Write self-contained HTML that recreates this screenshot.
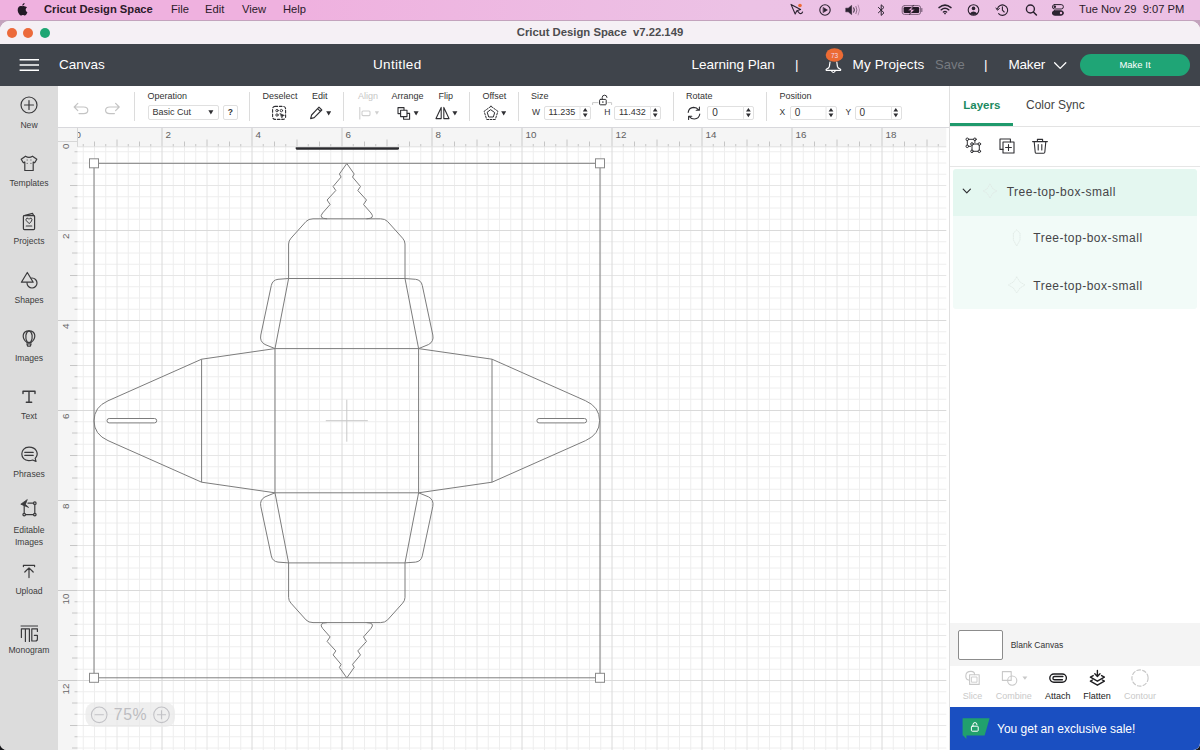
<!DOCTYPE html>
<html><head><meta charset="utf-8"><title>Cricut Design Space</title>
<style>
*{box-sizing:border-box;margin:0;padding:0}
html,body{width:1200px;height:750px;overflow:hidden;font-family:"Liberation Sans",sans-serif;}
body{background:linear-gradient(#c3a3bd 0,#c3a3bd 60px,#17171a 60px)}
.abs{position:absolute}
svg{position:absolute;overflow:visible}
#menubar{position:absolute;left:0;top:0;width:1200px;height:20px;background:linear-gradient(90deg,#efb1df 0,#efb1df 25%,#ecc2e5 62%,#ecc0e4 100%);color:#2b1a29;font-size:11.2px;}
#menubar span{position:absolute;top:3px;white-space:nowrap}
#win{position:absolute;left:0;top:21px;width:1200px;height:729px;border-radius:9px 9px 7px 7px;overflow:hidden;background:#fff}
#pg{position:absolute;left:0;top:-21px;width:1200px;height:750px}
#titlebar{position:absolute;left:0;top:20px;width:1200px;height:24px;background:#f5f0f5;}
#titlebar .t{position:absolute;left:0;width:1200px;top:6px;text-align:center;font-size:10.5px;font-weight:bold;color:#3a3a3c;letter-spacing:.1px}
.tl{position:absolute;top:27.5px;width:10px;height:10px;border-radius:50%}
#hdr{position:absolute;left:0;top:44px;width:1200px;height:42px;background:#3f444b;color:#fff;font-size:13.5px}
#hdr span{position:absolute;top:13px;line-height:16px;white-space:nowrap}
#side{position:absolute;left:0;top:86px;width:58px;height:664px;background:#dcdcdc}
.lb{position:absolute;left:0;width:58px;text-align:center;font-size:8.6px;color:#3c3c3c;line-height:12px;height:12px;margin-top:-6px}
#tool{position:absolute;left:58px;top:86px;width:891px;height:41px;background:#fff;font-size:9px;color:#333}
#tool .l{position:absolute;top:91px;white-space:nowrap;font-size:9px;color:#333;line-height:11px}
.l{position:absolute;white-space:nowrap;font-size:9px;color:#333;line-height:11px}
.sep{position:absolute;top:92px;width:1px;height:29px;background:#dcdcdc}
.box{position:absolute;top:104px;height:16px;border:1px solid #e0e0e0;border-radius:2px;background:#fff;font-size:9px;line-height:14px;padding-left:4px;color:#333;white-space:nowrap}
.lyr{letter-spacing:.5px;font-size:12px;color:#454548;line-height:14px;white-space:nowrap}
.act{top:690.7px;width:60px;text-align:center;font-size:9px;line-height:11px;white-space:nowrap}
#panel{position:absolute;left:949px;top:86px;width:251px;height:664px;background:#fff;border-left:1px solid #e0e0e0}
</style></head><body>
<div id="menubar">
<span style="left:44px;font-weight:bold">Cricut Design Space</span>
<span style="left:171px">File</span><span style="left:205px">Edit</span><span style="left:242px">View</span><span style="left:283px">Help</span>
<span style="left:1079px">Tue Nov 29&nbsp; 9:07 PM</span>
<svg style="left:0;top:0" width="1200" height="21" viewBox="0 0 1200 21" fill="none" stroke="#2b2230" stroke-width="1.1" stroke-linecap="round" stroke-linejoin="round">
<!-- apple -->
<path d="M25.3 6.6 C24.3 5.6 22.9 5.9 22.2 6.3 C21.4 5.9 19.8 5.5 18.6 6.9 C17 8.7 17.6 12.2 19.4 14.6 C20.2 15.6 21 15.7 22 15.2 C22.7 14.9 23.3 15 23.9 15.3 C24.8 15.7 25.6 15.4 26.3 14.4 C26.9 13.6 27.2 12.9 27.4 12.3 C25.4 11.4 25.1 8.3 27 7.5 C26.5 7 25.9 6.7 25.3 6.6Z M22.2 5.6 C22.2 4.2 23.2 3.1 24.6 2.9 C24.7 4.3 23.6 5.5 22.2 5.6Z" fill="#231a26" stroke="none"/>
<!-- cursor -->
<path d="M791 4.4 L795.2 14 L796.8 10.8 L800.6 9.6 Z M797.6 11.2 L799.4 13.2 Q801.4 14.4 802.6 12" stroke-width="1.1"/>
<circle cx="800" cy="5.5" r="1.8" fill="#ee6a35" stroke="none"/>
<!-- play -->
<circle cx="825" cy="10" r="5.2"/><path d="M823.4 7.6 L827.4 10 L823.4 12.4Z" fill="#2b2230" stroke-width=".6"/>
<!-- volume -->
<path d="M846 8.2 H848.2 L851.6 5.4 V14.6 L848.2 11.8 H846Z" fill="#2b2230" stroke-width=".6"/>
<path d="M853.8 7.8 Q855 10 853.8 12.2" stroke-width="1"/><path d="M856 6.4 Q858 10 856 13.6" stroke="#8a6a88" stroke-width="1"/><path d="M858.2 5 Q861 10 858.2 15" stroke="#b58eb0" stroke-width="1"/>
<!-- bluetooth -->
<path d="M878.4 7.4 L884 12.8 L881.2 15.4 V4.8 L884 7.4 L878.4 12.8" stroke-width="1"/>
<!-- battery -->
<rect x="902.2" y="5.6" width="18.4" height="8.8" rx="2.2" stroke="#7d627c" stroke-width="1"/><rect x="903.6" y="7" width="15.6" height="6" rx="1.2" fill="#231a26" stroke="none"/><path d="M921.8 8.6 V11.4" stroke="#7d627c" stroke-width="1.2"/>
<path d="M913.4 5.2 L908 10.6 H911 L909.4 14.8 L914.8 9.4 H911.8Z" fill="#efb2df" stroke="#231a26" stroke-width=".5"/>
<!-- wifi -->
<path d="M939 7.6 Q945 2.6 951 7.6" stroke-width="1.5"/><path d="M941.2 9.8 Q945 6.8 948.8 9.8" stroke-width="1.5"/><path d="M943.4 12 Q945 10.8 946.6 12" stroke-width="1.4"/><circle cx="945" cy="13.4" r=".9" fill="#2b2230" stroke="none"/>
<!-- user -->
<circle cx="973.5" cy="10" r="5.3"/><circle cx="973.5" cy="8.4" r="1.8" fill="#2b2230" stroke="none"/><path d="M969.8 13.6 Q973.5 9.6 977.2 13.6 Q973.5 16.4 969.8 13.6Z" fill="#2b2230" stroke="none"/>
<!-- time machine -->
<path d="M997.4 9 A5.2 5.2 0 1 1 998.6 13.6"/><path d="M996 8 L997.4 10.2 L999.4 8.6" stroke-width="1"/><path d="M1002.4 6.8 V10.2 L1004.2 12"/>
<!-- search -->
<circle cx="1030.4" cy="9" r="4" stroke-width="1.4"/><path d="M1033.4 12 L1036.4 15" stroke-width="1.6"/>
<!-- control center -->
<rect x="1052.4" y="4.6" width="11" height="4.4" rx="2.2" stroke-width="1"/><circle cx="1054.8" cy="6.8" r="1.3" fill="#2b2230" stroke="none"/>
<rect x="1052.4" y="10.8" width="11" height="4.4" rx="2.2" fill="#2b2230" stroke-width="1"/><circle cx="1061" cy="13" r="1.2" fill="#efb2df" stroke="none"/>
</svg>

</div>
<div id="win"><div id="pg">
<div id="titlebar"></div>
<div class="tl" style="left:6.5px;background:#ec6a3b"></div><div class="tl" style="left:23.3px;background:#ec6a3b"></div><div class="tl" style="left:40px;background:#1fa673"></div>
<div id="titlebar2" class="abs" style="left:0;width:1200px;top:25.5px;text-align:center;font-size:11.3px;line-height:13px;font-weight:bold;color:#4c4c4f">Cricut Design Space&nbsp; v7.22.149</div>
<div id="hdr">
<span style="left:59px">Canvas</span>
<span style="left:373px;letter-spacing:.34px">Untitled</span>
<span style="left:691.5px">Learning Plan</span>
<span style="left:795px">|</span>
<span style="left:852.5px;letter-spacing:.13px">My Projects</span>
<span style="left:935px;color:#777b80;font-size:13px;top:13px">Save</span>
<span style="left:984px">|</span>
<span style="left:1008.5px;letter-spacing:-.2px">Maker</span>
<div class="abs" style="left:1080px;top:10px;width:110px;height:21.5px;border-radius:11px;background:#1fa576;text-align:center;font-size:9.5px;line-height:22px">Make It</div>
<svg style="left:0;top:0" width="1200" height="42" viewBox="0 44 1200 42" fill="none" stroke="#fff" stroke-width="1.3" stroke-linecap="round" stroke-linejoin="round">
<path d="M19.6 59.8H39M19.6 65H39M19.6 70.2H39" stroke-width="1.6" stroke-linecap="butt"/>
<!-- bell -->
<path d="M830 62 L829.4 66.4 Q829 68.4 826.6 69 Q825.8 69.4 826.2 70.4 H840.6 Q841 69.4 840.2 69 Q837.8 68.4 837.4 66.4 L836.8 62" stroke-width="1.2"/>
<path d="M831.6 71 Q833.4 74 835.2 71" stroke-width="1.2"/>
<ellipse cx="834.5" cy="55" rx="8.8" ry="6.7" fill="#ec6b34" stroke="none"/>
<!-- chevron -->
<path d="M1054.6 62.8 L1060.2 68.4 L1065.8 62.8" stroke-width="1.3"/>
</svg>
<div class="abs" style="left:826px;top:6.5px;width:17px;text-align:center;font-size:6.5px;line-height:9px;color:#f3d9ee">73</div>

</div>
<svg class="abs" style="left:58px;top:127px" width="891" height="623" viewBox="58 127 891 623" font-family="Liberation Sans, sans-serif">
<rect x="58" y="127" width="891" height="623" fill="#fff"/>
<path d="M83.25 147V750M94.50 147V750M105.75 147V750M128.25 147V750M139.50 147V750M150.75 147V750M173.25 147V750M184.50 147V750M195.75 147V750M218.25 147V750M229.50 147V750M240.75 147V750M263.25 147V750M274.50 147V750M285.75 147V750M308.25 147V750M319.50 147V750M330.75 147V750M353.25 147V750M364.50 147V750M375.75 147V750M398.25 147V750M409.50 147V750M420.75 147V750M443.25 147V750M454.50 147V750M465.75 147V750M488.25 147V750M499.50 147V750M510.75 147V750M533.25 147V750M544.50 147V750M555.75 147V750M578.25 147V750M589.50 147V750M600.75 147V750M623.25 147V750M634.50 147V750M645.75 147V750M668.25 147V750M679.50 147V750M690.75 147V750M713.25 147V750M724.50 147V750M735.75 147V750M758.25 147V750M769.50 147V750M780.75 147V750M803.25 147V750M814.50 147V750M825.75 147V750M848.25 147V750M859.50 147V750M870.75 147V750M893.25 147V750M904.50 147V750M915.75 147V750M938.25 147V750M77 151.75H949M77 163.00H949M77 174.25H949M77 196.75H949M77 208.00H949M77 219.25H949M77 241.75H949M77 253.00H949M77 264.25H949M77 286.75H949M77 298.00H949M77 309.25H949M77 331.75H949M77 343.00H949M77 354.25H949M77 376.75H949M77 388.00H949M77 399.25H949M77 421.75H949M77 433.00H949M77 444.25H949M77 466.75H949M77 478.00H949M77 489.25H949M77 511.75H949M77 523.00H949M77 534.25H949M77 556.75H949M77 568.00H949M77 579.25H949M77 601.75H949M77 613.00H949M77 624.25H949M77 646.75H949M77 658.00H949M77 669.25H949M77 691.75H949M77 703.00H949M77 714.25H949M77 736.75H949M77 748.00H949" stroke="#eeeeee" stroke-width="1" fill="none"/>
<path d="M117.00 147V750M207.00 147V750M297.00 147V750M387.00 147V750M477.00 147V750M567.00 147V750M657.00 147V750M747.00 147V750M837.00 147V750M927.00 147V750M77 185.50H949M77 275.50H949M77 365.50H949M77 455.50H949M77 545.50H949M77 635.50H949M77 725.50H949" stroke="#e6e6e6" stroke-width="1" fill="none"/>
<path d="M162.00 147V750M252.00 147V750M342.00 147V750M432.00 147V750M522.00 147V750M612.00 147V750M702.00 147V750M792.00 147V750M882.00 147V750M77 230.50H949M77 320.50H949M77 410.50H949M77 500.50H949M77 590.50H949M77 680.50H949" stroke="#dadada" stroke-width="1" fill="none"/>
<path d="M366.5 218.8Q375.5 218.5 371.0 213.0L363.5 204.5L366.5 200.0L357.8 190.5L360.5 186.5L352.5 177.0L354.2 174.0L346.8 163.5L339.4 174.0L341.1 177.0L333.1 186.5L335.8 190.5L327.1 200.0L330.1 204.5L322.6 213.0Q318.1 218.5 327.1 218.8M288.6 278.5V244.0Q288.6 240.8 291.0 238.2L306.0 221.5Q308.5 218.8 313.0 218.8H380.6Q385.1 218.8 387.6 221.5L402.6 238.2Q405.0 240.8 405.0 244.0V278.5M288.6 278.5H405.0M288.6 278.5L275.0 348.6M288.6 278.5L278.0 279.3Q272.5 280.0 271.3 285.5L260.8 335.0Q259.5 341.5 265.0 344.5L275.0 348.6M405.0 278.5L418.6 348.6M405.0 278.5L415.6 279.3Q421.1 280.0 422.3 285.5L432.8 335.0Q434.1 341.5 428.6 344.5L418.6 348.6M366.5 622.6Q375.5 622.9 371.0 628.4L363.5 636.9L366.5 641.4L357.8 650.9L360.5 654.9L352.5 664.4L354.2 667.4L346.8 677.9L339.4 667.4L341.1 664.4L333.1 654.9L335.8 650.9L327.1 641.4L330.1 636.9L322.6 628.4Q318.1 622.9 327.1 622.6M288.6 562.9V597.4Q288.6 600.6 291.0 603.2L306.0 619.9Q308.5 622.6 313.0 622.6H380.6Q385.1 622.6 387.6 619.9L402.6 603.2Q405.0 600.6 405.0 597.4V562.9M288.6 562.9H405.0M288.6 562.9L275.0 492.8M288.6 562.9L278.0 562.1Q272.5 561.4 271.3 555.9L260.8 506.4Q259.5 499.9 265.0 496.9L275.0 492.8M405.0 562.9L418.6 492.8M405.0 562.9L415.6 562.1Q421.1 561.4 422.3 555.9L432.8 506.4Q434.1 499.9 428.6 496.9L418.6 492.8M275 348.6H418.6V492.8H275ZM275.0 348.6L201.6 359.2L108.0 400.8Q94.0 407.0 94.0 420.7Q94.0 434.4 108.0 440.6L201.6 482.2L275.0 492.8M201.6 359.2V482.2M418.6 348.6L492.0 359.2L585.6 400.8Q599.6 407.0 599.6 420.7Q599.6 434.4 585.6 440.6L492.0 482.2L418.6 492.8M492.0 359.2V482.2" fill="none" stroke="#7c7c7c" stroke-width="1" stroke-linejoin="round"/>
<rect x="107.0" y="418.5" width="49.7" height="4.4" rx="2.2" fill="#fff" stroke="#7c7c7c" stroke-width="1"/>
<rect x="536.9" y="418.5" width="49.7" height="4.4" rx="2.2" fill="#fff" stroke="#7c7c7c" stroke-width="1"/>
<path d="M346.8 399.7V441.7M325.8 420.7H367.8" stroke="#c8c8c8" stroke-width="1" fill="none"/>
<rect x="94" y="163.3" width="506" height="514.5" fill="none" stroke="#7e7e7e" stroke-width="1"/>
<rect x="89.5" y="158.8" width="9" height="9" fill="#fff" stroke="#8a8a8a" stroke-width="1"/>
<rect x="595.5" y="158.8" width="9" height="9" fill="#fff" stroke="#8a8a8a" stroke-width="1"/>
<rect x="89.5" y="673.3" width="9" height="9" fill="#fff" stroke="#8a8a8a" stroke-width="1"/>
<rect x="595.5" y="673.3" width="9" height="9" fill="#fff" stroke="#8a8a8a" stroke-width="1"/>
<rect x="85.5" y="702.5" width="89.5" height="24.5" rx="9" fill="#e9e9e9" fill-opacity=".72"/>
<g stroke="#c2c2c6" stroke-width="1.1" fill="none"><circle cx="99.2" cy="714.8" r="7.8"/><path d="M94.6 714.8H103.8"/><circle cx="161.5" cy="714.8" r="7.8"/><path d="M157 714.8H166M161.5 710.3V719.3"/></g>
<text x="130.5" y="720.4" font-size="15.8" letter-spacing=".7" fill="#bdbdc1" text-anchor="middle">75%</text>
<path d="M295.7 146.6H399V148.2Q399 149.7 397.5 149.7H297.2Q295.7 149.7 295.7 148.2Z" fill="#2a2a2e"/>
<rect x="58" y="127" width="891" height="20" fill="#f5f5f5"/>
<rect x="58" y="127" width="19.5" height="623" fill="#f5f5f5"/>
<path d="M83.25 144V147M94.50 141.5V147M105.75 144V147M117.00 139.5V147M128.25 144V147M139.50 141.5V147M150.75 144V147M173.25 144V147M184.50 141.5V147M195.75 144V147M207.00 139.5V147M218.25 144V147M229.50 141.5V147M240.75 144V147M263.25 144V147M274.50 141.5V147M285.75 144V147M297.00 139.5V147M308.25 144V147M319.50 141.5V147M330.75 144V147M353.25 144V147M364.50 141.5V147M375.75 144V147M387.00 139.5V147M398.25 144V147M409.50 141.5V147M420.75 144V147M443.25 144V147M454.50 141.5V147M465.75 144V147M477.00 139.5V147M488.25 144V147M499.50 141.5V147M510.75 144V147M533.25 144V147M544.50 141.5V147M555.75 144V147M567.00 139.5V147M578.25 144V147M589.50 141.5V147M600.75 144V147M623.25 144V147M634.50 141.5V147M645.75 144V147M657.00 139.5V147M668.25 144V147M679.50 141.5V147M690.75 144V147M713.25 144V147M724.50 141.5V147M735.75 144V147M747.00 139.5V147M758.25 144V147M769.50 141.5V147M780.75 144V147M803.25 144V147M814.50 141.5V147M825.75 144V147M837.00 139.5V147M848.25 144V147M859.50 141.5V147M870.75 144V147M893.25 144V147M904.50 141.5V147M915.75 144V147M927.00 139.5V147M938.25 144V147M74.5 151.75H77.5M72 163.00H77.5M74.5 174.25H77.5M70 185.50H77.5M74.5 196.75H77.5M72 208.00H77.5M74.5 219.25H77.5M74.5 241.75H77.5M72 253.00H77.5M74.5 264.25H77.5M70 275.50H77.5M74.5 286.75H77.5M72 298.00H77.5M74.5 309.25H77.5M74.5 331.75H77.5M72 343.00H77.5M74.5 354.25H77.5M70 365.50H77.5M74.5 376.75H77.5M72 388.00H77.5M74.5 399.25H77.5M74.5 421.75H77.5M72 433.00H77.5M74.5 444.25H77.5M70 455.50H77.5M74.5 466.75H77.5M72 478.00H77.5M74.5 489.25H77.5M74.5 511.75H77.5M72 523.00H77.5M74.5 534.25H77.5M70 545.50H77.5M74.5 556.75H77.5M72 568.00H77.5M74.5 579.25H77.5M74.5 601.75H77.5M72 613.00H77.5M74.5 624.25H77.5M70 635.50H77.5M74.5 646.75H77.5M72 658.00H77.5M74.5 669.25H77.5M74.5 691.75H77.5M72 703.00H77.5M74.5 714.25H77.5M70 725.50H77.5M74.5 736.75H77.5M72 748.00H77.5" stroke="#c6c6c6" stroke-width="1" fill="none"/>
<path d="M162.00 127V147M252.00 127V147M342.00 127V147M432.00 127V147M522.00 127V147M612.00 127V147M702.00 127V147M792.00 127V147M882.00 127V147M58 230.50H77.5M58 320.50H77.5M58 410.50H77.5M58 500.50H77.5M58 590.50H77.5M58 680.50H77.5" stroke="#cbcbcb" stroke-width="1" fill="none"/>
<text x="75.5" y="138.1" font-size="9.8" fill="#606060">0</text>
<text x="165.5" y="138.1" font-size="9.8" fill="#606060">2</text>
<text x="255.5" y="138.1" font-size="9.8" fill="#606060">4</text>
<text x="345.5" y="138.1" font-size="9.8" fill="#606060">6</text>
<text x="435.5" y="138.1" font-size="9.8" fill="#606060">8</text>
<text x="525.5" y="138.1" font-size="9.8" fill="#606060">10</text>
<text x="615.5" y="138.1" font-size="9.8" fill="#606060">12</text>
<text x="705.5" y="138.1" font-size="9.8" fill="#606060">14</text>
<text x="795.5" y="138.1" font-size="9.8" fill="#606060">16</text>
<text x="885.5" y="138.1" font-size="9.8" fill="#606060">18</text>
<rect x="58" y="127" width="19.5" height="14" fill="#f5f5f5"/>
<path d="M58 141.5H77.5M77.5 127V147" stroke="#d6d6d6" stroke-width="1" fill="none"/>
<text transform="translate(68.8 140.5) rotate(-90)" font-size="9.8" fill="#666" text-anchor="end" x="-3.1" y="0">0</text>
<text transform="translate(68.8 230.5) rotate(-90)" font-size="9.8" fill="#666" text-anchor="end" x="-3.1" y="0">2</text>
<text transform="translate(68.8 320.5) rotate(-90)" font-size="9.8" fill="#666" text-anchor="end" x="-3.1" y="0">4</text>
<text transform="translate(68.8 410.5) rotate(-90)" font-size="9.8" fill="#666" text-anchor="end" x="-3.1" y="0">6</text>
<text transform="translate(68.8 500.5) rotate(-90)" font-size="9.8" fill="#666" text-anchor="end" x="-3.1" y="0">8</text>
<text transform="translate(68.8 590.5) rotate(-90)" font-size="9.8" fill="#666" text-anchor="end" x="-3.1" y="0">10</text>
<text transform="translate(68.8 680.5) rotate(-90)" font-size="9.8" fill="#666" text-anchor="end" x="-3.1" y="0">12</text>
<path d="M77.5 146.8H949" stroke="#e2e2e2" stroke-width="1"/>
<rect x="946.3" y="128" width="3" height="622" fill="#fff"/>
<path d="M58 127.5H949" stroke="#d8d8dc" stroke-width="1"/>
</svg>
<div id="side"></div>
<svg style="left:0;top:86px" width="58" height="664" viewBox="0 86 58 664" fill="none" stroke="#3a3a3c" stroke-width="1.2" stroke-linecap="round" stroke-linejoin="round">
<!-- New -->
<circle cx="29" cy="105" r="8"/><path d="M29 100.5V109.5M24.5 105H33.5"/>
<!-- Templates (t-shirt) -->
<path d="M25.5 156.2 L21.2 159.2 L23.3 162.8 L24.8 162 V170.5 H33.2 V162 L34.7 162.8 L36.8 159.2 L32.5 156.2 Q29 158.6 25.5 156.2Z"/>
<path d="M27.1 160h.1M30.9 160h.1M27.1 163.4h.1M30.9 163.4h.1" stroke-width="1"/>
<!-- Projects (card) -->
<path d="M24.2 215.6 H33.8 Q34.6 215.6 34.6 216.4 V228.6 Q34.6 229.6 33.6 229.6 H24.4 Q23.4 229.6 23.4 228.6 V216.4 Q23.4 215.6 24.2 215.6Z"/>
<path d="M25 215.4 L32.6 213.4 L33.6 215.6"/>
<path d="M29 223.4 L26.3 220.7 Q25.4 219 26.8 218.2 Q28.2 217.8 29 219.3 Q29.8 217.8 31.2 218.2 Q32.6 219 31.7 220.7Z" stroke-width="1"/>
<path d="M26.3 226H31.7"/>
<!-- Shapes -->
<circle cx="32" cy="283" r="5"/><path d="M27.3 272.5 L21.4 282.2 H33.2Z" fill="#dcdcdc"/>
<!-- Images (balloon) -->
<path d="M29 330.8 C21.8 330.8 21.6 338.5 26.8 342.3 H31.2 C36.4 338.5 36.2 330.8 29 330.8Z"/>
<path d="M27.4 342.3 C24.6 338 25.6 332 29 330.8 C32.4 332 33.4 338 30.6 342.3"/>
<path d="M26.9 343.9H31.1 L30.4 346.2 H27.6Z"/>
<!-- Text -->
<path d="M23 393.6 V391.3 H35 V393.6 M29 391.3 V402 M26.3 402.3 H31.7" stroke-width="1.4"/>
<!-- Phrases -->
<path d="M29 447.2 C19.2 447.2 19.6 461 29 460.6 C30.6 460.6 31.6 460.4 32.6 460 L36 461.4 L35.2 458.4 C39.4 453.8 36.4 447.2 29 447.2Z"/>
<path d="M24.8 452.4H33.2M24.8 455.4H33.2"/>
<!-- Editable images -->
<path d="M24.2 503.2 V513.4 M25.6 514.6 H33.6 M34.8 513.4 V504.4 M33.6 503.2 H28"/>
<circle cx="34.8" cy="503.2" r="1.3"/><circle cx="34.8" cy="514.6" r="1.3"/><circle cx="24.2" cy="514.6" r="1.3"/>
<path d="M27 499.8 L20.8 504.2 L28.6 507.4 L25.6 504.6Z" fill="#3a3a3c" stroke-width=".8"/>
<!-- Upload -->
<path d="M23.4 566.6V565.4H34.6V566.6M29 577.6V568M24.8 572 L29 567.8 L33.2 572"/>
<!-- Monogram -->
<path d="M21 626H37.6" stroke-width="1"/>
<path d="M21.4 637.4V628.8H29.4V641.4M25.4 628.8V641.4M37.4 631.4V628.8H31.8 V641 H35.4 Q37.4 641 37.4 639 V635.4 H34.4" stroke-width="1.2"/>
</svg>
<div class="lb" style="top:124.5px">New</div>
<div class="lb" style="top:183px">Templates</div>
<div class="lb" style="top:241.3px">Projects</div>
<div class="lb" style="top:299.5px">Shapes</div>
<div class="lb" style="top:358px">Images</div>
<div class="lb" style="top:416.3px">Text</div>
<div class="lb" style="top:474.4px">Phrases</div>
<div class="lb" style="top:530px">Editable</div>
<div class="lb" style="top:542.4px">Images</div>
<div class="lb" style="top:591.3px">Upload</div>
<div class="lb" style="top:650px">Monogram</div>

<div id="tool"></div>
<div class="sep" style="left:134px"></div><div class="sep" style="left:249px"></div><div class="sep" style="left:343px"></div><div class="sep" style="left:469px"></div><div class="sep" style="left:518px"></div><div class="sep" style="left:672.5px"></div><div class="sep" style="left:765.5px"></div>
<div class="l" style="left:147.5px;top:91px">Operation</div>
<div class="box" style="left:147.5px;width:71px;top:104.5px;height:15.5px;line-height:12.6px">Basic Cut</div>
<div class="box" style="left:222.5px;width:15px;top:104.5px;height:15.5px;line-height:12.6px;padding-left:4.2px;font-size:8.5px;font-weight:bold">?</div>
<div class="l" style="left:262.5px;top:91px">Deselect</div>
<div class="l" style="left:312px;top:91px">Edit</div>
<div class="l" style="left:358px;top:91px;color:#c6c6c6">Align</div>
<div class="l" style="left:391.5px;top:91px">Arrange</div>
<div class="l" style="left:438.5px;top:91px">Flip</div>
<div class="l" style="left:482.5px;top:91px">Offset</div>
<div class="l" style="left:531px;top:91px">Size</div>
<div class="l" style="left:532px;top:107px;font-size:8.5px">W</div>
<div class="box" style="left:543.5px;width:47px;top:105.5px;height:14px;line-height:11.2px">11.235</div>
<div class="l" style="left:604.2px;top:107px;font-size:8.5px">H</div>
<div class="box" style="left:614px;width:47px;top:105.5px;height:14px;line-height:11.2px">11.432</div>
<div class="l" style="left:686px;top:91px">Rotate</div>
<div class="box" style="left:707px;width:47px;top:105.5px;height:14px;line-height:12px;font-size:10px;padding-left:4.2px">0</div>
<div class="l" style="left:779.5px;top:91px">Position</div>
<div class="l" style="left:779.5px;top:107px;font-size:8.5px">X</div>
<div class="box" style="left:789.5px;width:47px;top:105.5px;height:14px;line-height:12px;font-size:10px;padding-left:4.2px">0</div>
<div class="l" style="left:845.5px;top:107px;font-size:8.5px">Y</div>
<div class="box" style="left:855px;width:47px;top:105.5px;height:14px;line-height:12px;font-size:10px;padding-left:3.4px">0</div>
<svg style="left:58px;top:86px" width="891" height="41" viewBox="58 86 891 41" fill="none" stroke="#2f2f33" stroke-width="1.1" stroke-linecap="round" stroke-linejoin="round">
<!-- undo / redo -->
<g stroke="#c4c4c4" stroke-width="1.2">
<path d="M77.8 103.4 L74.2 107 L77.8 110.6 M74.6 107 H83.6 Q87.8 107 87.8 110.3 Q87.8 113.6 83.6 113.6 H79"/>
<path d="M115.6 103.4 L119.2 107 L115.6 110.6 M118.8 107 H109.8 Q105.6 107 105.6 110.3 Q105.6 113.6 109.8 113.6 H114.4"/>
</g>
<!-- dropdown arrows -->
<g fill="#2f2f33" stroke="none">
<path d="M208.4 110.2h5l-2.5 4.2z"/>
<path d="M326.2 111.3h5l-2.5 4.2z"/>
<path d="M413.6 111.3h5l-2.5 4.2z"/>
<path d="M452.4 111.3h5l-2.5 4.2z"/>
<path d="M501.2 111.3h5l-2.5 4.2z"/>
<path d="M374.8 111.2h4.2l-2.1 3.6z" fill="#cfcfcf"/>
</g>
<path d="M580 106.5V118.5M650.5 106.5V118.5M743.5 106.5V118.5M826 106.5V118.5M891.5 106.5V118.5" stroke="#e6e6e6" stroke-width="1"/>
<!-- spinners -->
<g fill="#2f2f33" stroke="none">
<path d="M582.8 111.6h4.8l-2.4-3.6zM582.8 113.6h4.8l-2.4 3.6z"/>
<path d="M652.8 111.6h4.8l-2.4-3.6zM652.8 113.6h4.8l-2.4 3.6z"/>
<path d="M746 111.6h4.8l-2.4-3.6zM746 113.6h4.8l-2.4 3.6z"/>
<path d="M828.6 111.6h4.8l-2.4-3.6zM828.6 113.6h4.8l-2.4 3.6z"/>
<path d="M893.4 111.6h4.8l-2.4-3.6zM893.4 113.6h4.8l-2.4 3.6z"/>
</g>
<!-- deselect -->
<rect x="272.6" y="106.4" width="13" height="13" rx="2.4" stroke-dasharray="2.6 1.8"/>
<circle cx="277" cy="110.6" r="1.2" stroke-width=".9"/><circle cx="281.4" cy="110.6" r="1.2" stroke-width=".9"/><circle cx="277" cy="115" r="1.2" stroke-width=".9"/>
<path d="M280.2 113.6 L284.4 115.4 L282.6 116 L282 117.8Z" fill="#2f2f33" stroke-width=".6"/>
<!-- edit pencil -->
<path d="M319 107.2 L321.8 110 L314.2 117.6 L310.6 118.6 L311.6 115 Z M317.6 108.6 L320.4 111.4"/>
<!-- align (disabled) -->
<g stroke="#cfcfcf"><path d="M359.8 107.6V119"/><rect x="362" y="111" width="8" height="4.6" rx="1"/></g>
<!-- arrange -->
<path d="M398 107.6 H404 V109.8 M398 107.6 V113.6 H400.2"/><rect x="400.6" y="110.2" width="6.4" height="6.4"/><path d="M407.4 113.4 H409.6 V119.2 H403.6 V117"/>
<!-- flip -->
<path d="M441.2 107.4 V118.6 H436 Z M443.8 107.4 V118.6 H449 Z"/>
<!-- offset -->
<path d="M491.0 109.9L494.7 112.6L493.3 117.0L488.7 117.0L487.3 112.6Z" stroke-width="1"/>
<path d="M491.0 106.3L497.9 111.3L495.3 119.5L486.7 119.5L484.1 111.3Z" stroke-dasharray="2 1.4" stroke-width="1" stroke-linejoin="round"/>
<!-- lock -->
<path d="M592.6 104.6 V102.6 H598 M611.6 104.6 V102.6 H608" stroke="#c9c9c9" stroke-width="1"/>
<rect x="599.6" y="99.4" width="6.6" height="5.4" rx=".8" stroke-width="1"/><path d="M602.2 99.2 V97.6 Q602.2 95.2 604.6 95.2 Q607 95.2 607 97.4" stroke-width="1"/><path d="M602.9 101.6v1" stroke-width="1"/>
<!-- rotate -->
<path d="M688.2 112.4 Q688.8 107.8 693.6 107.4 Q696.8 107.4 698.6 109.8 M699.4 107 V110.2 H696.2"/>
<path d="M699.8 114 Q699.2 118.6 694.4 119 Q691.2 119 689.4 116.6 M688.6 119.4 V116.2 H691.8"/>
</svg>

<div id="panel"></div>
<div class="abs" style="left:950px;top:125.5px;width:250px;height:1px;background:#e3e3e3"></div>
<div class="abs" style="left:950px;top:123px;width:63px;height:2.6px;background:#1f9a6c"></div>
<div class="abs" style="left:963.3px;top:98px;font-size:11.5px;font-weight:bold;color:#1c8a5f;line-height:14px">Layers</div>
<div class="abs" style="left:1026px;top:98px;font-size:12px;color:#444;line-height:14px;white-space:nowrap">Color Sync</div>
<div class="abs" style="left:950px;top:165.5px;width:250px;height:1px;background:#e6e6e6"></div>
<div class="abs" style="left:953.3px;top:169.3px;width:243.4px;height:46.5px;background:#e4f7f0;border-radius:3px 3px 0 0"></div>
<div class="abs" style="left:953.3px;top:215.8px;width:243.4px;height:93.2px;background:#f2fbf8;border-radius:0 0 3px 3px"></div>
<div class="abs lyr" style="left:1006.7px;top:184.7px">Tree-top-box-small</div>
<div class="abs lyr" style="left:1033.3px;top:231.3px">Tree-top-box-small</div>
<div class="abs lyr" style="left:1033.3px;top:278.6px">Tree-top-box-small</div>
<div class="abs" style="left:950px;top:623px;width:250px;height:43px;background:#f4f4f4"></div>
<div class="abs" style="left:958px;top:630px;width:44.5px;height:30px;background:#fff;border:1px solid #8c8c8c;border-radius:2px"></div>
<div class="abs" style="left:1010.7px;top:639.5px;font-size:8.5px;color:#333;line-height:11px;white-space:nowrap">Blank Canvas</div>
<div class="abs act" style="left:942.5px;color:#c9c9c9">Slice</div>
<div class="abs act" style="left:983.7px;color:#c9c9c9">Combine</div>
<div class="abs act" style="left:1027.7px;color:#222">Attach</div>
<div class="abs act" style="left:1067px;color:#222">Flatten</div>
<div class="abs act" style="left:1110px;color:#c9c9c9">Contour</div>
<div class="abs" style="left:950px;top:706.7px;width:250px;height:44px;background:#1a4fc1"></div>
<div class="abs" style="left:997px;top:721.6px;font-size:12px;color:#fff;line-height:14px;white-space:nowrap">You get an exclusive sale!</div>
<svg style="left:949px;top:86px" width="251" height="664" viewBox="949 86 251 664" fill="none" stroke="#2f2f33" stroke-width="1.1" stroke-linecap="round" stroke-linejoin="round">
<!-- group -->
<g stroke-width="1">
<path d="M968.6 139.3H973.6M967.3 140.6V145M974.9 140.6V142.6M968.4 146.3H970.6"/>
<path d="M973.3 144H978M972 145.3V150M979.3 145.3V150M973.3 151.3H978"/>
<circle cx="967.3" cy="139.3" r="1.3"/><circle cx="974.9" cy="139.3" r="1.3"/><circle cx="967.3" cy="146.3" r="1.3"/>
<circle cx="972" cy="144" r="1.3"/><circle cx="979.3" cy="144" r="1.3"/><circle cx="972" cy="151.3" r="1.3"/><circle cx="979.3" cy="151.3" r="1.3"/>
</g>
<!-- duplicate -->
<path d="M1003 149.4 H1000 V139 H1010.4 V142"/><rect x="1003" y="142" width="11" height="11"/><path d="M1008.5 144.6V150.4M1005.6 147.5H1011.4"/>
<!-- trash -->
<path d="M1032.6 141.6H1047.4M1037.4 141.4 V139.4 H1042.6 V141.4M1034.2 141.8 L1035.2 152.2 Q1035.3 153.2 1036.4 153.2 H1043.6 Q1044.7 153.2 1044.8 152.2 L1045.8 141.8M1038.2 144.6V150M1041.8 144.6V150"/>
<!-- chevron -->
<path d="M963.2 189.2 L966.8 192.8 L970.4 189.2" stroke-width="1.2"/>
<!-- faint thumbs -->
<g stroke="#dfe9e5" stroke-width=".8" stroke-dasharray="1 1.2">
<path d="M990 184 L993 189 L997 191 L993 193 L990 198 L987 193 L983 191 L987 189Z"/>
<path d="M1016.7 230 L1020 233 V240 L1016.7 246 L1013.4 240 V233Z"/>
<path d="M1016.7 277 L1020 282 L1025 285 L1020 288 L1016.7 293 L1013.4 288 L1008.4 285 L1013.4 282Z"/>
</g>
<!-- slice -->
<g stroke="#c9c9c9" stroke-width="1.1">
<path d="M974.6 674.6 Q974.6 671.4 971 671.4 Q965.8 671.4 965.8 676 Q965.8 680 969.4 680.2"/><rect x="969.6" y="674.8" width="9.6" height="9.6"/>
<path d="M971.8 677 H977 V682.2 H971.8Z" stroke-width=".9"/>
</g>
<!-- combine -->
<g stroke="#c9c9c9" stroke-width="1.1">
<rect x="1002.4" y="671.6" width="8.8" height="8.8"/><circle cx="1012.2" cy="680.6" r="4.6"/>
<path d="M1022.4 676.4h5l-2.5 3.4z" fill="#c9c9c9" stroke="none"/>
</g>
<!-- attach -->
<g stroke="#1f1f22" stroke-width="1.4">
<path d="M1053.9 682.2 H1062.3 a4.1 4.1 0 0 0 0 -8.2 H1053.9 a4.1 4.1 0 0 0 0 8.2z"/>
<path d="M1062.9 676.5 H1054.6 a1.65 1.65 0 0 0 0 3.3 H1062.4"/>
</g>
<!-- flatten -->
<g stroke="#1f1f22" stroke-width="1.4">
<path d="M1097.4 670.4V676.2M1094.8 673.8 L1097.4 676.4 L1100 673.8"/>
<path d="M1093.2 675.6 L1090.4 677.2 L1097.4 681.2 L1104.4 677.2 L1101.6 675.6"/>
<path d="M1092.4 680 L1090.4 681.2 L1097.4 685.2 L1104.4 681.2 L1102.4 680"/>
</g>
<!-- contour -->
<circle cx="1140" cy="678" r="8.1" stroke="#c9c9c9" stroke-width="1.2" stroke-dasharray="3.6 2.2"/>
<!-- sale icon -->
<path d="M962.6 718.2 H989.6 L984.6 735.4 H966.4 L966.4 739 L963.2 735.4 H962.6Z" fill="#21a06d" stroke="none"/>
<g stroke="#fff" stroke-width="1"><rect x="971.4" y="726.2" width="6.8" height="5" rx=".8"/><path d="M973 726 V724.6 Q973 722.6 975 722.6 Q977 722.6 977 724.6"/></g>
</svg>

</div></div>
</body></html>
